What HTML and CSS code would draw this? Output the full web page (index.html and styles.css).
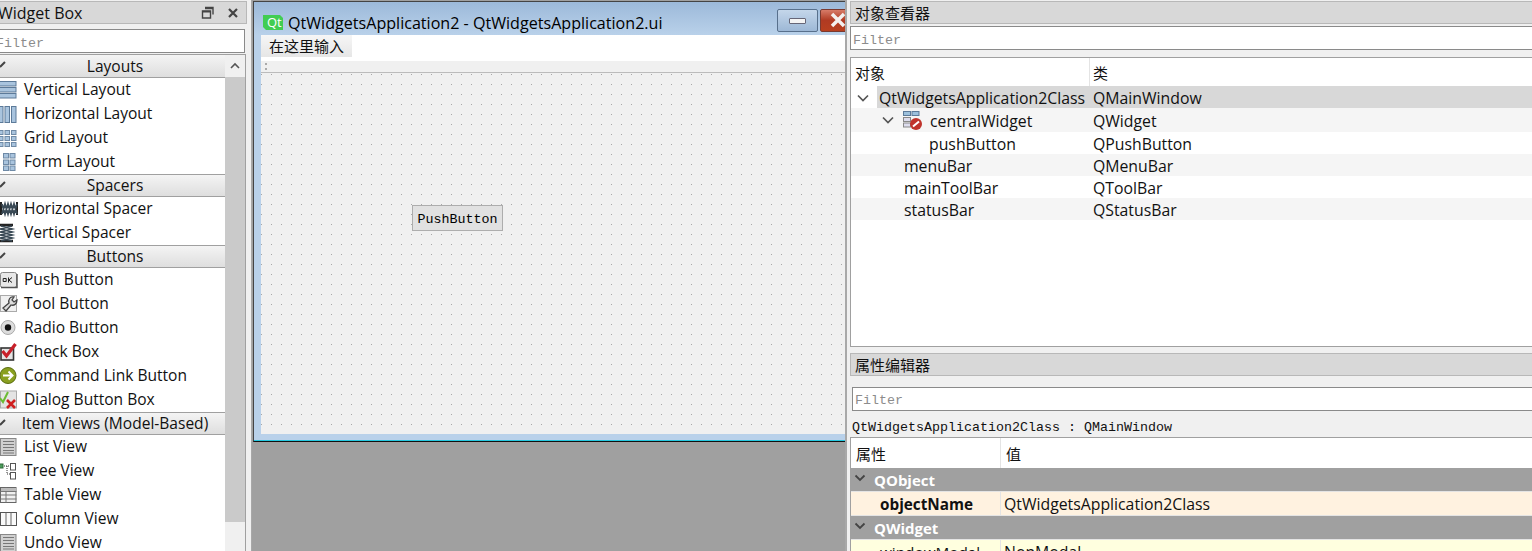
FILE: index.html
```html
<!DOCTYPE html>
<html lang="zh">
<head>
<meta charset="utf-8">
<title>Qt Designer</title>
<link rel="stylesheet" href="styles.css">
</head>
<body>
<div class="app">
  <aside class="widgetbox">
    <div class="dock-title">
      <span class="dock-name">Widget Box</span>
      <svg class="dock-btn" width="14" height="14" viewBox="0 0 14 14"><path d="M4 1.5h8v7M1.5 5h8v7h-8zM4 2.5h8" fill="none" stroke="#444" stroke-width="1.4"/><path d="M1.5 5.7h8" stroke="#444" stroke-width="1.6"/></svg>
      <svg class="dock-btn" width="14" height="14" viewBox="0 0 14 14"><path d="M3 3l8 8M11 3l-8 8" stroke="#444" stroke-width="2.2"/></svg>
    </div>
    <div class="wb-filter mono">Filter</div>
    <div class="wb-tree">
      <div class="wb-list">
        <div class="cat"><svg class="cat-arrow" width="8" height="8" viewBox="0 0 8 8"><path d="M0 7L5 2" stroke="#444" stroke-width="2"/></svg><span class="cat-label">Layouts</span></div>
        <div class="item"><svg class="ico" viewBox="0 0 20 20"><g fill="#a9c4de" stroke="#5c7a99"><rect x="0.5" y="1.5" width="18.5" height="4.5"/><rect x="0.5" y="7.5" width="18.5" height="4.5"/><rect x="0.5" y="13.5" width="18.5" height="4.5"/></g></svg><span>Vertical Layout</span></div>
        <div class="item"><svg class="ico" viewBox="0 0 20 20"><g fill="#a9c4de" stroke="#5c7a99"><rect x="1.5" y="2.5" width="4.5" height="16"/><rect x="8" y="2.5" width="4.5" height="16"/><rect x="14.5" y="2.5" width="4.5" height="16"/></g></svg><span>Horizontal Layout</span></div>
        <div class="item"><svg class="ico" viewBox="0 0 20 20"><g fill="#a9c4de" stroke="#6f8aa6"><rect x="1.5" y="2.5" width="4.5" height="4"/><rect x="8" y="2.5" width="4.5" height="4"/><rect x="14.5" y="2.5" width="4.5" height="4"/><rect x="1.5" y="8.5" width="4.5" height="4"/><rect x="8" y="8.5" width="4.5" height="4"/><rect x="14.5" y="8.5" width="4.5" height="4"/><rect x="1.5" y="14.5" width="4.5" height="4"/><rect x="8" y="14.5" width="4.5" height="4"/><rect x="14.5" y="14.5" width="4.5" height="4"/></g></svg><span>Grid Layout</span></div>
        <div class="item"><svg class="ico s" viewBox="0 0 20 20"><g fill="#a9c4de" stroke="#6f8aa6"><rect x="3.5" y="1.5" width="5" height="4.5"/><rect x="10" y="1.5" width="5" height="4.5"/><rect x="3.5" y="8" width="5" height="4.5"/><rect x="10" y="8" width="5" height="4.5"/><rect x="3.5" y="14" width="5" height="4.5"/><rect x="10" y="14" width="5" height="4.5"/></g></svg><span>Form Layout</span></div>
        <div class="cat"><svg class="cat-arrow" width="8" height="8" viewBox="0 0 8 8"><path d="M0 7L5 2" stroke="#444" stroke-width="2"/></svg><span class="cat-label">Spacers</span></div>
        <div class="item"><svg class="ico s" viewBox="0 0 20 20"><path d="M1 3v13M17 3v13" stroke="#222" stroke-width="2"/><path d="M2 5l3 10 3-10 3 10 3-10 3 10M2 15l3-10 3 10 3-10 3 10 3-10" fill="none" stroke="#3a4a56" stroke-width="1.8"/></svg><span>Horizontal Spacer</span></div>
        <div class="item"><svg class="ico" viewBox="0 0 20 20"><path d="M3 2h13M3 18h13" stroke="#222" stroke-width="2.4"/><path d="M4 3l11 3-11 3 11 3-11 3 11 3M15 3L4 6l11 3-11 3 11 3-11 3" fill="none" stroke="#3a4a56" stroke-width="1.8"/></svg><span>Vertical Spacer</span></div>
        <div class="cat"><svg class="cat-arrow" width="8" height="8" viewBox="0 0 8 8"><path d="M0 7L5 2" stroke="#444" stroke-width="2"/></svg><span class="cat-label">Buttons</span></div>
        <div class="item"><svg class="ico s" viewBox="0 0 20 20"><rect x="0.5" y="2.5" width="16" height="15" rx="2" fill="#e8e8e8" stroke="#888"/><path d="M1 17.5h16V4" fill="none" stroke="#555" stroke-width="1.5"/><path d="M3.2 8.5h3v3h-3zM8.5 7.5v5M12 7.5l-3.2 2.5 3.2 2.5" fill="none" stroke="#222"/></svg><span>Push Button</span></div>
        <div class="item"><svg class="ico s" viewBox="0 0 20 20"><rect x="0.5" y="1.5" width="16" height="16" fill="#f0f0f0" stroke="#aaa"/><path d="M3 14l6-5c-1-3 1-7 5-6l-2 3 2 2 3-2c0 4-3 6-6 5l-5 6z" fill="#ddd" stroke="#444" stroke-width="1.3"/></svg><span>Tool Button</span></div>
        <div class="item"><svg class="ico s" viewBox="0 0 20 20"><circle cx="8" cy="9.5" r="7" fill="#dcdcdc" stroke="#aaa"/><circle cx="8" cy="9.5" r="3.2" fill="#111"/></svg><span>Radio Button</span></div>
        <div class="item"><svg class="ico s" viewBox="0 0 20 20"><rect x="1" y="6" width="12.5" height="12" fill="#e4e4e4" stroke="#333" stroke-width="1.6"/><path d="M2.5 9l4 5 9-12" fill="none" stroke="#c8202a" stroke-width="3.2"/></svg><span>Check Box</span></div>
        <div class="item"><svg class="ico s" viewBox="0 0 20 20"><circle cx="8" cy="9.5" r="8" fill="#8aa020" stroke="#5b6e10"/><path d="M3 9.5h9M8.5 5.5l4 4-4 4" fill="none" stroke="#fff" stroke-width="2"/></svg><span>Command Link Button</span></div>
        <div class="item"><svg class="ico s" viewBox="0 0 20 20"><rect x="0.5" y="1" width="16" height="17" fill="#e4e4e4" stroke="#aaa"/><path d="M0 8l3 4 5-10" fill="none" stroke="#6bbb33" stroke-width="2"/><path d="M7 10l8 8M15 10l-8 8" stroke="#cf1f1f" stroke-width="2.6"/></svg><span>Dialog Button Box</span></div>
        <div class="cat"><svg class="cat-arrow" width="8" height="8" viewBox="0 0 8 8"><path d="M0 7L5 2" stroke="#444" stroke-width="2"/></svg><span class="cat-label">Item Views (Model-Based)</span></div>
        <div class="item"><svg class="ico s" viewBox="0 0 20 20"><rect x="0.5" y="1.5" width="15.5" height="17" fill="#d0d0d0" stroke="#888"/><path d="M3 4.5h11M3 7.5h11M3 10.5h11M3 13.5h11M3 16h11" stroke="#777"/></svg><span>List View</span></div>
        <div class="item"><svg class="ico s" viewBox="0 0 20 20"><rect x="-2" y="3" width="5" height="4" fill="#4a9a5a" stroke="#2f6a3a"/><path d="M4 5h5M7 5v8h3" fill="none" stroke="#333" stroke-dasharray="1 1"/><rect x="10.5" y="2.5" width="5" height="6.5" fill="#fff" stroke="#555"/><rect x="10.5" y="11.5" width="5" height="6.5" fill="#fff" stroke="#555"/></svg><span>Tree View</span></div>
        <div class="item"><svg class="ico s" viewBox="0 0 20 20"><rect x="0.5" y="2.5" width="15.5" height="15" fill="#f0f0f0" stroke="#666"/><path d="M0.5 6.5h16M0.5 10h16M0.5 14h16M6 2.5v15" stroke="#777"/><rect x="1" y="3" width="15" height="3" fill="#bbb"/></svg><span>Table View</span></div>
        <div class="item"><svg class="ico s" viewBox="0 0 20 20"><rect x="0.5" y="3.5" width="16" height="13" fill="#fafafa" stroke="#555"/><path d="M6 3.5v13M11 3.5v13" stroke="#666"/></svg><span>Column View</span></div>
        <div class="item"><svg class="ico s" viewBox="0 0 20 20"><rect x="0.5" y="1.5" width="15.5" height="17" fill="#d0d0d0" stroke="#888"/><path d="M3 4.5h11M3 7.5h11M3 10.5h11M3 13.5h11M3 16h11" stroke="#777"/></svg><span>Undo View</span></div>
      </div>
      <div class="wb-scroll">
        <div class="sb-up"><svg width="12" height="8" viewBox="0 0 12 8"><path d="M2 6l4-4 4 4" fill="none" stroke="#555" stroke-width="1.6"/></svg></div>
        <div class="sb-thumb"></div>
      </div>
    </div>
  </aside>

  <main class="mdi">
    <div class="form-window">
      <div class="win-title">
        <svg class="qt-logo" width="20" height="15" viewBox="0 0 20 15"><path d="M0 0h17l3 3v12H3l-3-3z" fill="#41cd52"/></svg>
        <span class="qt-mark">Qt</span>
        <span class="win-text">QtWidgetsApplication2 - QtWidgetsApplication2.ui</span>
        <div class="win-min"><span class="min-bar"></span></div>
        <div class="win-close"><svg width="18" height="16" viewBox="0 0 18 16"><path d="M3 2l12 12M15 2L3 14" stroke="#f4f0ee" stroke-width="3.5"/></svg></div>
      </div>
      <div class="win-body">
        <div class="menubar"><span class="menu-item cjk">在这里输入</span></div>
        <div class="toolbar"><span class="grip"></span></div>
        <div class="canvas"><div class="pushbutton mono">PushButton</div></div>
      </div>
    </div>
  </main>

  <section class="right">
    <div class="r-title cjk">对象查看器</div>
    <div class="r-filter mono">Filter</div>
    <div class="obj-tree">
      <div class="obj-head cjk"><span class="oh-a">对象</span><span class="oh-b">类</span></div>
      <div class="row r1">
        <svg class="chev" width="12" height="8" viewBox="0 0 12 8"><path d="M1 1.5l5 5 5-5" fill="none" stroke="#555" stroke-width="1.7"/></svg>
        <span class="name sel">QtWidgetsApplication2Class</span><span class="type sel">QMainWindow</span>
      </div>
      <div class="row r2 alt">
        <svg class="chev" width="12" height="8" viewBox="0 0 12 8"><path d="M1 1.5l5 5 5-5" fill="none" stroke="#555" stroke-width="1.7"/></svg>
        <svg class="broken" width="20" height="20" viewBox="0 0 20 20"><g fill="#9cc0dc" stroke="#5c7a99"><rect x="0.5" y="1.5" width="7" height="4"/><rect x="9" y="1.5" width="7" height="4"/></g><g fill="#dde" stroke="#888"><rect x="0.5" y="7.5" width="7" height="4"/><rect x="0.5" y="13" width="7" height="4"/></g><circle cx="13" cy="14" r="6" fill="#c0332c"/><path d="M10 16.5l6-5" stroke="#fff" stroke-width="2"/></svg>
        <span class="name">centralWidget</span><span class="type">QWidget</span>
      </div>
      <div class="row r3"><span class="name">pushButton</span><span class="type">QPushButton</span></div>
      <div class="row r4 alt"><span class="name">menuBar</span><span class="type">QMenuBar</span></div>
      <div class="row r4"><span class="name">mainToolBar</span><span class="type">QToolBar</span></div>
      <div class="row r4 alt"><span class="name">statusBar</span><span class="type">QStatusBar</span></div>
    </div>
    <div class="r-title prop-title cjk">属性编辑器</div>
    <div class="p-filter mono">Filter</div>
    <div class="p-class mono">QtWidgetsApplication2Class : QMainWindow</div>
    <div class="prop-table">
      <div class="prop-head cjk"><span class="ph-a">属性</span><span class="ph-b">值</span></div>
      <div class="group"><svg width="12" height="8" viewBox="0 0 12 8"><path d="M1.5 1.5l4.5 4.5 4.5-4.5" fill="none" stroke="#444" stroke-width="1.8"/></svg><span>QObject</span></div>
      <div class="prop orange"><span class="p-name">objectName</span><span class="p-val">QtWidgetsApplication2Class</span></div>
      <div class="group"><svg width="12" height="8" viewBox="0 0 12 8"><path d="M1.5 1.5l4.5 4.5 4.5-4.5" fill="none" stroke="#444" stroke-width="1.8"/></svg><span>QWidget</span></div>
      <div class="prop yellow"><span class="p-name plain">windowModal</span><span class="p-val">NonModal</span></div>
    </div>
  </section>
</div>
</body>
</html>
```
FILE: styles.css
```css
* { box-sizing: border-box; }
html, body { margin: 0; padding: 0; }
body {
  width: 1532px; height: 551px; overflow: hidden;
  background: #f0f0f0; color: #111;
  font: 15.8px/20px "Open Sans", "Noto Sans CJK SC", sans-serif;
}
.cjk { font-family: "Noto Sans CJK SC", "Open Sans", sans-serif; font-size: 15px; }
.mono { font-family: "Liberation Mono", monospace; font-size: 13.33px; }
.app { display: flex; width: 1532px; height: 551px; overflow: hidden; }

/* Widget box */
.widgetbox { width: 252px; flex: none; height: 551px; padding-top: 1px; overflow: hidden; border-right: 1px solid #a8a8a8; }
.dock-title {
  display: flex; align-items: center; height: 23px; width: 247px;
  background: #d8d8d8; border: 1px solid #b8b8b8; border-left: 0;
}
.dock-name { margin-left: -2px; flex: 1; font-size: 16px; }
.dock-btn { margin-right: 11px; }
.dock-btn:last-child { margin-right: 6px; }
.wb-filter {
  margin-top: 5px; height: 24px; width: 245px; background: #fff;
  border: 1px solid #8a8a8a; border-left: 0; color: #8c8c8c; line-height: 22px; padding-top: 3px; text-indent: -4px;
}
.wb-tree { display: flex; width: 246px; height: 500px; margin-top: 1px; border: 1px solid #a0a0a0; border-left: 0; border-bottom: 0; }
.wb-list { width: 225px; flex: none; background: #fff; font-size: 15.55px; }
.cat {
  display: flex; align-items: center; height: 23px;
  background: linear-gradient(#f4f4f4, #dedede);
  border-bottom: 1px solid #a0a0a0; border-top: 1px solid #a0a0a0;
}
.cat:first-child { border-top: 0; }
.cat-arrow { flex: none; margin-top: -4px; }
.cat-label { flex: 1; text-align: center; margin: -2px 3px 0 0; white-space: nowrap; }
.cat:first-child .cat-label { margin-top: 0; }
.item { display: flex; align-items: center; height: 24px; margin-left: -3px; }
.item span { margin-top: -2px; }
.ico { width: 20px; height: 20px; flex: none; margin-right: 7px; overflow: visible; }
.ico.s { transform: translateX(3px); }
.wb-scroll { width: 20px; flex: none; display: flex; flex-direction: column; background: #f0f0f0; }
.sb-up { height: 22px; display: flex; align-items: center; justify-content: center; }
.sb-thumb { height: 445px; background: #cacaca; }

/* Form window */
.mdi { width: 593px; flex: none; height: 551px; background: #a0a0a0; overflow: hidden; }
.form-window {
  width: 620px; height: 441px; margin: 1px 0 0 1px;
  background: #b9d1ea; border: 1px solid #444; border-bottom: 1px solid #111; border-right: 0;
  box-shadow: inset 0 -1px 0 #25c8e0;
  display: flex; flex-direction: column;
}
.win-title {
  height: 33px; flex: none; display: flex; align-items: center; padding-left: 9px;
  background: linear-gradient(#9cb9d9, #b9d1ea);
  position: relative;
}
.qt-logo { flex: none; margin-top: 8px; }
.qt-mark { position: absolute; left: 13px; top: 12px; color: #fff; font: 400 13px/17px "Open Sans", sans-serif; }
.win-text { margin-left: 5px; width: 489px; flex: none; font-size: 16.1px; color: #000; margin-top: 8px; white-space: nowrap; }
.win-min {
  width: 41px; height: 23px; flex: none; margin-top: 3px;
  background: linear-gradient(#c4d6ea, #9db8d6); border: 1px solid #58708c; border-radius: 2px;
  display: flex; align-items: center; justify-content: center;
}
.min-bar { width: 17px; height: 6px; background: #f4f4f4; border: 1px solid #667; border-radius: 1px; margin-top: 2px; }
.win-close {
  width: 44px; height: 23px; flex: none; margin: 3px 0 0 2px;
  background: linear-gradient(#d77b68, #b03a22 50%, #b8401f); border: 1px solid #7a3a30; border-radius: 2px;
  display: flex; align-items: center; justify-content: flex-start; padding-left: 8px;
}
.win-body { margin-left: 7px; margin-bottom: 7px; flex: 1; display: flex; flex-direction: column; background: #f0f0f0; }
.menubar { height: 25px; flex: none; background: #fff; }
.menu-item {
  display: inline-block; width: 91px; height: 22px; padding-left: 8px; line-height: 21px;
  background: linear-gradient(#f6f6f6, #e6e6e6);
}
.toolbar { height: 13px; flex: none; background: #f0f0f0; border-top: 1px solid #fff; border-bottom: 1px solid #bbb; padding: 2px 0 0 4px; }
.grip { display: block; width: 2px; height: 7px; background: linear-gradient(#aaa 2px, transparent 2px, transparent 5px, #aaa 5px); }
.canvas {
  flex: 1; position: relative;
  background-color: #a8a8a8;
  background-image: linear-gradient(to bottom, transparent 1px, #f0f0f0 1px), linear-gradient(to right, transparent 1px, #f0f0f0 1px);
  background-size: 10px 10px;
  background-position: 0 1px, 0 1px;
}
.pushbutton {
  position: absolute; left: 151px; top: 132px; width: 91px; height: 26px;
  background: #e1e1e1; border: 1px solid #adadad; text-align: center; line-height: 27px; color: #000;
}

/* Right side */
.right { width: 687px; flex: none; height: 551px; overflow: hidden; padding: 1px 0 0 3px; border-left: 2px solid #a8a8a8; }
.r-title {
  height: 23px; margin-right: -2px; background: #d8d8d8; border: 1px solid #b8b8b8;
  padding-left: 4px; line-height: 21px;
}
.r-filter {
  height: 24px; margin-top: 2px; margin-right: -2px; background: #fff;
  border: 1px solid #8a8a8a; color: #8c8c8c; line-height: 24px; padding: 2px 0 0 2px;
}
.obj-tree { height: 290px; margin-top: 7px; margin-right: -2px; background: #fff; border: 1px solid #a0a0a0; }
.obj-head { display: flex; height: 28px; line-height: 29px; }
.oh-a { width: 239px; padding-left: 4px; border-right: 1px solid #e4e4e4; }
.oh-b { padding-left: 3px; }
.row { display: flex; align-items: center; height: 22px; position: relative; }
.row.alt { background: #f5f5f5; }
.r2 { height: 24px; }
.row .name, .row .type { padding-top: 2px; white-space: nowrap; }
.chev { position: absolute; left: 6px; top: 8px; }
.r1 .name { margin-left: 26px; width: 216px; padding-left: 2px; }
.sel { background: #d8d8d8; height: 22px; }
.r1 .type { flex: 1; }
.r2 .chev { left: 31px; }
.broken { position: absolute; left: 52px; top: 2px; }
.r2 .name { margin-left: 79px; width: 163px; }
.r3 .name { margin-left: 78px; width: 164px; }
.r4 .name { margin-left: 53px; width: 189px; }
.prop-title { margin-top: 6px; }
.p-filter {
  height: 24px; margin: 11px -2px 0 2px; background: #fff;
  border: 1px solid #8a8a8a; color: #8c8c8c; line-height: 24px; padding: 1px 0 0 2px;
}
.p-class { height: 19px; margin: 7px 0 0 2px; line-height: 20px; white-space: nowrap; }
.prop-table { border: 1px solid #a0a0a0; border-bottom: 0; margin-right: -2px; height: 120px; background: #fff; }
.prop-head { display: flex; height: 30px; line-height: 32px; }
.ph-a { width: 150px; padding-left: 5px; border-right: 1px solid #e4e4e4; }
.ph-b { padding-left: 5px; }
.group { display: flex; align-items: center; height: 24px; background: #a0a0a0; border-bottom: 1px solid #e4e4e4; color: #fff; font-weight: 700; font-size: 15px; }
.group svg { margin: -4px 0 0 3px; flex: none; }
.group span { margin-left: 8px; }
.prop { display: flex; align-items: center; height: 24px; border-bottom: 1px solid #e4e4e4; }
.orange { background: #fff2e0; }
.yellow { background: #ffffdf; }
.p-name { width: 150px; padding-left: 29px; font-weight: 700; font-size: 15.3px; border-right: 1px solid #e4e4e4; height: 24px; line-height: 24px; }
.p-name.plain { font-weight: 400; }
.p-val { padding-left: 3px; white-space: nowrap; }
```
